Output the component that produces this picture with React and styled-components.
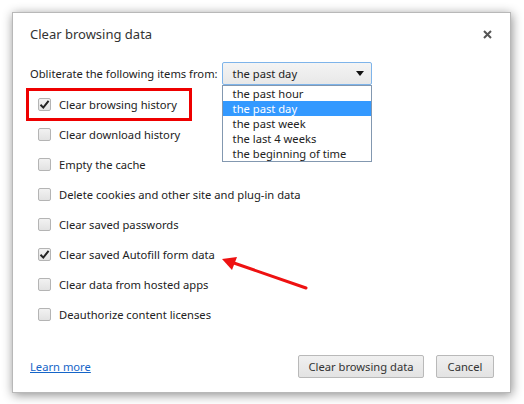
import React from "react";
import styled, { createGlobalStyle } from "styled-components";

const Global = createGlobalStyle`
  html, body { margin: 0; padding: 0; background: #fff; }
  body { font-family: "Noto Sans", "Open Sans", sans-serif; }
`;

const Page = styled.div`
  width: 524px;
  height: 404px;
  padding: 12px 0 0 12px;
  box-sizing: border-box;
`;

const Dialog = styled.div`
  position: relative;
  width: 499px;
  height: 381px;
  box-sizing: border-box;
  background: #fff;
  border: 1px solid #b8b8b8;
  box-shadow: 1px 2px 10px rgba(0, 0, 0, 0.45);
  padding: 11px 17px 0 17px;
  display: flex;
  flex-direction: column;
  color: #222;
  font-size: 11.2px;
`;

const Header = styled.div`
  display: flex;
  align-items: center;
  justify-content: space-between;
  height: 20px;
`;

const Title = styled.div`
  font-size: 13px;
  color: #333;
  line-height: 20px;
`;

const Close = styled.div`
  width: 12px;
  height: 12px;
  display: flex;
  align-items: center;
  justify-content: center;
`;

const RangeRow = styled.div`
  margin-top: 18px;
  display: flex;
  align-items: center;
  gap: 4px;
  height: 23px;
  position: relative;
  z-index: 2;
`;

const SelectWrap = styled.div`
  position: relative;
`;

const SelectBox = styled.div`
  width: 150px;
  height: 23px;
  box-sizing: border-box;
  border: 1px solid #7eb4ea;
  border-radius: 2px;
  background: linear-gradient(#f4f4f4, #e8e8e8);
  display: flex;
  align-items: center;
  justify-content: space-between;
  padding: 0 7px 0 10px;
  color: #222;
`;

const DropList = styled.ul`
  position: absolute;
  left: 0;
  top: 23px;
  width: 150px;
  box-sizing: border-box;
  margin: 0;
  padding: 0;
  list-style: none;
  background: #fff;
  border: 1px solid #8398b0;
`;

const DropItem = styled.li`
  height: 15px;
  line-height: 15px;
  padding: 0 10px;
  white-space: nowrap;
  background: ${(p) => (p.$active ? "#3399ff" : "transparent")};
  color: ${(p) => (p.$active ? "#fff" : "#222")};
`;

const Options = styled.div`
  margin-top: 4px;
  display: flex;
  flex-direction: column;
  padding-left: 8px;
`;

const OptionRow = styled.label`
  display: flex;
  align-items: center;
  gap: 8px;
  height: 30px;
  color: #222;
`;

const Box = styled.span`
  width: 13px;
  height: 13px;
  box-sizing: border-box;
  border: 1px solid #b4b4b4;
  border-radius: 2px;
  background: linear-gradient(#f2f2f2, #e2e2e2);
  display: flex;
  align-items: center;
  justify-content: center;
`;

const Footer = styled.div`
  margin-top: 26px;
  display: flex;
  align-items: center;
  justify-content: space-between;
  height: 23px;
`;

const LearnMore = styled.a`
  color: #1565c8;
  text-decoration: underline;
  font-size: 11.2px;
`;

const Buttons = styled.div`
  display: flex;
  gap: 12px;
  margin-right: -1px;
`;

const Button = styled.button`
  height: 23px;
  box-sizing: border-box;
  padding: 0;
  width: ${(p) => p.$w}px;
  white-space: nowrap;
  border: 1px solid #b9b9b9;
  border-radius: 2px;
  background: linear-gradient(#f0f0f0, #e3e3e3);
  font-family: inherit;
  font-size: 11.2px;
  color: #333;
`;

const RedBox = styled.div`
  position: absolute;
  left: 13px;
  top: 75px;
  width: 166px;
  height: 33px;
  box-sizing: border-box;
  border: 3px solid #ee0000;
  pointer-events: none;
`;

const ArrowSvg = styled.svg`
  position: absolute;
  left: 200px;
  top: 236px;
  pointer-events: none;
`;

const Check = () => (
  <svg width="11" height="11" viewBox="0 0 11 11">
    <path d="M1.5 5.8 L4.3 8.6 L9.6 1.8" fill="none" stroke="#222" strokeWidth="2" />
  </svg>
);

const options = [
  ["Clear browsing history", true],
  ["Clear download history", false],
  ["Empty the cache", false],
  ["Delete cookies and other site and plug-in data", false],
  ["Clear saved passwords", false],
  ["Clear saved Autofill form data", true],
  ["Clear data from hosted apps", false],
  ["Deauthorize content licenses", false],
];

const ranges = ["the past hour", "the past day", "the past week", "the last 4 weeks", "the beginning of time"];

export default function App() {
  return (
    <>
      <Global />
      <Page>
        <Dialog>
          <Header>
            <Title>Clear browsing data</Title>
            <Close>
              <svg width="9" height="9" viewBox="0 0 9 9">
                <path d="M1 1 L8 8 M8 1 L1 8" stroke="#555" strokeWidth="2" />
              </svg>
            </Close>
          </Header>
          <RangeRow>
            <span>Obliterate the following items from:</span>
            <SelectWrap>
              <SelectBox>
                <span>the past day</span>
                <svg width="8" height="5" viewBox="0 0 8 5">
                  <path d="M0 0 L8 0 L4 5 Z" fill="#111" />
                </svg>
              </SelectBox>
              <DropList>
                {ranges.map((r) => (
                  <DropItem key={r} $active={r === "the past day"}>
                    {r}
                  </DropItem>
                ))}
              </DropList>
            </SelectWrap>
          </RangeRow>
          <Options>
            {options.map(([label, checked]) => (
              <OptionRow key={label}>
                <Box>{checked && <Check />}</Box>
                <span>{label}</span>
              </OptionRow>
            ))}
          </Options>
          <Footer>
            <LearnMore href="#">Learn more</LearnMore>
            <Buttons>
              <Button $w={126}>Clear browsing data</Button>
              <Button $w={58}>Cancel</Button>
            </Buttons>
          </Footer>
          <RedBox />
          <ArrowSvg width="100" height="45" viewBox="0 0 100 45">
            <path d="M93 39 L18 13" stroke="#ee1111" strokeWidth="3" strokeLinecap="round" />
            <path d="M9 10 L24 8 L19 21 Z" fill="#ee1111" />
          </ArrowSvg>
        </Dialog>
      </Page>
    </>
  );
}
